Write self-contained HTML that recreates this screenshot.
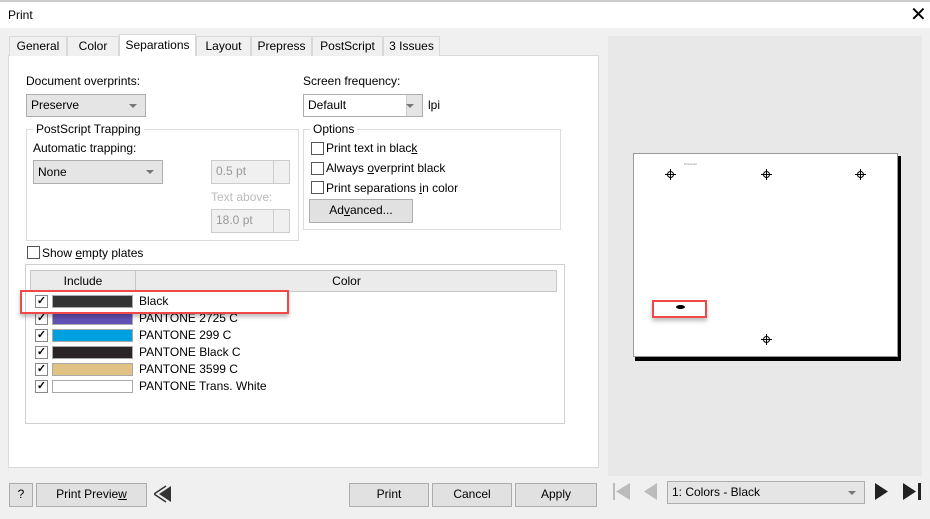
<!DOCTYPE html>
<html><head><meta charset="utf-8"><style>
*{box-sizing:border-box;margin:0;padding:0}
body{width:930px;height:519px;background:#f0f0f0;font-family:"Liberation Sans",sans-serif;font-size:12px;color:#000;position:relative;overflow:hidden}
.a{position:absolute}
.tab{position:absolute;top:36px;height:20px;background:#f0f0f0;border:1px solid #d9d9d9;border-bottom:none;text-align:center;line-height:18px}
.dd{position:absolute;background:#e5e5e5;border:1px solid #adadad;padding-left:4px;line-height:20px}
.dd:after{content:"";position:absolute;right:8px;top:9px;border:4px solid transparent;border-top:4px solid #777;border-bottom:none}
.btn{position:absolute;background:#e1e1e1;border:1px solid #adadad;text-align:center;line-height:21px}
.grp{position:absolute;border:1px solid #dcdcdc}
.cb{position:absolute;width:13px;height:13px;border:1px solid #333;background:#fff}
.spin{position:absolute;border:1px solid #ccc;background:#f0f0f0;color:#999;padding-left:4px;line-height:21px}
.spin i{position:absolute;right:0;top:0;width:16px;height:100%;border-left:1px solid #ccc}
.row{position:absolute;left:31px;height:17px;width:500px}
.row .ck{position:absolute;left:4px;top:2px;width:13px;height:13px;border:1px solid #888;background:#fff;font-size:11px;line-height:11px;text-align:center;font-weight:bold}
.row .sw{position:absolute;left:21px;top:2px;width:81px;height:13px;border:1px solid #aaa}
.row span{position:absolute;left:108px;top:1px}
.cross{position:absolute;width:11px;height:11px}
</style></head><body>
<div class="a" style="left:0;top:0;width:930px;height:28px;background:#fff;border-top:2px solid #ccc"></div>
<div class="a" style="left:8px;top:8px;font-size:12px">Print</div>
<div class="a" style="left:910px;top:2px;font-size:20px">✕</div>

<div class="a" style="left:8px;top:55px;width:591px;height:413px;background:#fff;border:1px solid #d9d9d9"></div>
<div class="tab" style="left:9px;width:58px">General</div>
<div class="tab" style="left:67px;width:52px">Color</div>
<div class="tab" style="left:119px;top:34px;height:22px;width:77px;background:#fff;line-height:21px">Separations</div>
<div class="tab" style="left:196px;width:55px">Layout</div>
<div class="tab" style="left:251px;width:61px">Prepress</div>
<div class="tab" style="left:312px;width:71px">PostScript</div>
<div class="tab" style="left:383px;width:57px">3 Issues</div>

<div class="a" style="left:26px;top:74px">Document overprints:</div>
<div class="dd" style="left:26px;top:94px;width:120px;height:23px">Preserve</div>
<div class="a" style="left:303px;top:74px">Screen frequency:</div>
<div class="dd" style="left:303px;top:94px;width:120px;height:23px;background:#fff">Default<div class="a" style="right:0;top:0;width:16px;height:21px;background:#e5e5e5;border-left:1px solid #ccc"></div></div>
<div class="a" style="left:428px;top:98px">lpi</div>

<div class="grp" style="left:26px;top:129px;width:273px;height:112px"></div>
<div class="a" style="left:33px;top:122px;background:#fff;padding:0 3px">PostScript Trapping</div>
<div class="a" style="left:33px;top:141px">Automatic trapping:</div>
<div class="dd" style="left:33px;top:160px;width:130px;height:24px;line-height:22px">None</div>
<div class="spin" style="left:211px;top:160px;width:79px;height:24px">0.5 pt<i></i></div>
<div class="a" style="left:211px;top:190px;color:#bbb">Text above:</div>
<div class="spin" style="left:211px;top:209px;width:79px;height:24px">18.0 pt<i></i></div>

<div class="grp" style="left:303px;top:129px;width:258px;height:101px"></div>
<div class="a" style="left:310px;top:122px;background:#fff;padding:0 3px">Options</div>
<div class="cb" style="left:311px;top:142px;border-color:#555"></div><div class="a" style="left:326px;top:141px">Print text in blac<u>k</u></div>
<div class="cb" style="left:311px;top:162px;border-color:#555"></div><div class="a" style="left:326px;top:161px">Always <u>o</u>verprint black</div>
<div class="cb" style="left:311px;top:181px;border-color:#555"></div><div class="a" style="left:326px;top:181px">Print separations <u>i</u>n color</div>
<div class="btn" style="left:309px;top:199px;width:104px;height:24px">Ad<u>v</u>anced...</div>

<div class="cb" style="left:27px;top:246px;border-color:#555"></div><div class="a" style="left:42px;top:246px">Show <u>e</u>mpty plates</div>

<div class="a" style="left:25px;top:264px;width:540px;height:160px;border:1px solid #d0d0d0;background:#fff"></div>
<div class="a" style="left:30px;top:270px;width:527px;height:22px;background:#ebebeb;border:1px solid #c8c8c8"></div>
<div class="a" style="left:135px;top:270px;width:1px;height:22px;background:#c8c8c8"></div>
<div class="a" style="left:31px;top:274px;width:104px;text-align:center">Include</div>
<div class="a" style="left:136px;top:274px;width:421px;text-align:center">Color</div>

<div class="row" style="top:293px"><div class="ck">✓</div><div class="sw" style="background:#333"></div><span>Black</span></div>
<div class="row" style="top:310px"><div class="ck">✓</div><div class="sw" style="background:#6350b5"></div><span>PANTONE 2725 C</span></div>
<div class="row" style="top:327px"><div class="ck">✓</div><div class="sw" style="background:#00a0e0"></div><span>PANTONE 299 C</span></div>
<div class="row" style="top:344px"><div class="ck">✓</div><div class="sw" style="background:#2a2426"></div><span>PANTONE Black C</span></div>
<div class="row" style="top:361px"><div class="ck">✓</div><div class="sw" style="background:#e0c285"></div><span>PANTONE 3599 C</span></div>
<div class="row" style="top:378px"><div class="ck">✓</div><div class="sw" style="background:#fff"></div><span>PANTONE Trans. White</span></div>
<div class="a" style="left:20px;top:290px;width:269px;height:24px;border:2px solid #f04848;box-shadow:0 3px 4px rgba(0,0,0,.25)"></div>

<div class="btn" style="left:9px;top:483px;width:24px;height:24px">?</div>
<div class="btn" style="left:36px;top:483px;width:111px;height:24px">Print Previe<u>w</u></div>
<svg class="a" style="left:154px;top:485px" width="18" height="18"><path d="M17 1 L5 9 L17 17 Z" fill="#333"/><path d="M12 1 L0 9 L12 17" fill="none" stroke="#333" stroke-width="1.5"/></svg>
<div class="btn" style="left:349px;top:483px;width:80px;height:24px">Print</div>
<div class="btn" style="left:432px;top:483px;width:80px;height:24px">Cancel</div>
<div class="btn" style="left:515px;top:483px;width:82px;height:24px">Apply</div>

<div class="a" style="left:608px;top:36px;width:314px;height:440px;background:#e8e8e8"></div>
<div class="a" style="left:635px;top:156px;width:266px;height:205px;background:#000"></div>
<div class="a" style="left:633px;top:153px;width:265px;height:204px;background:#fff;border:1px solid #999"></div>
<div class="a" style="left:684px;top:162px;font-size:3px;color:#888">Postscript</div>
<svg class="cross" style="left:665px;top:169px"><circle cx="5.5" cy="5.5" r="3" fill="none" stroke="#000"/><path d="M0 5.5H11M5.5 0V11" stroke="#000"/></svg>
<svg class="cross" style="left:761px;top:169px"><circle cx="5.5" cy="5.5" r="3" fill="none" stroke="#000"/><path d="M0 5.5H11M5.5 0V11" stroke="#000"/></svg>
<svg class="cross" style="left:855px;top:169px"><circle cx="5.5" cy="5.5" r="3" fill="none" stroke="#000"/><path d="M0 5.5H11M5.5 0V11" stroke="#000"/></svg>
<svg class="cross" style="left:761px;top:334px"><circle cx="5.5" cy="5.5" r="3" fill="none" stroke="#000"/><path d="M0 5.5H11M5.5 0V11" stroke="#000"/></svg>
<div class="a" style="left:652px;top:300px;width:55px;height:18px;border:2px solid #f04848;box-shadow:0 3px 4px rgba(0,0,0,.25)"></div>
<div class="a" style="left:676px;top:305px;width:9px;height:4px;border-radius:50%;background:#000"></div>

<svg class="a" style="left:613px;top:483px" width="18" height="17"><rect x="0" y="0" width="2" height="17" fill="#bbb"/><path d="M17 0L3 8.5L17 17Z" fill="#bbb"/></svg>
<svg class="a" style="left:644px;top:483px" width="14" height="17"><path d="M13 0L0 8.5L13 17Z" fill="#bbb"/></svg>
<div class="dd" style="left:667px;top:481px;width:198px;height:23px">1: Colors - Black</div>
<svg class="a" style="left:875px;top:483px" width="14" height="17"><path d="M0 0L13 8.5L0 17Z" fill="#222"/></svg>
<svg class="a" style="left:903px;top:483px" width="18" height="17"><path d="M0 0L13 8.5L0 17Z" fill="#222"/><rect x="15" y="0" width="3" height="17" fill="#222"/></svg>
</body></html>
